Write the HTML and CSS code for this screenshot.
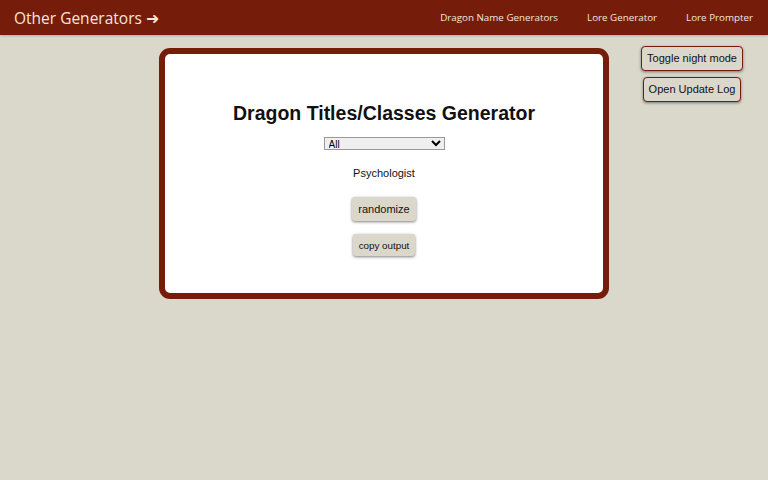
FILE: index.html
```html
<!DOCTYPE html>
<html>
<head>
  <title>Dragon Titles/Classes Generator</title>
  <link rel="stylesheet" href="styles.css">
</head>
<body>
  <div class="topnav">
    <a class="home" href="#">Other Generators &#10140;</a>
    <div class="links">
      <a href="#">Dragon Name Generators</a>
      <a href="#">Lore Generator</a>
      <a href="#">Lore Prompter</a>
    </div>
  </div>

  <div class="side-buttons">
    <button class="side-btn">Toggle night mode</button>
    <button class="side-btn">Open Update Log</button>
  </div>

  <div class="box">
    <h1>Dragon Titles/Classes Generator</h1>
    <select id="category">
      <option>All</option>
      <option>Titles</option>
      <option>Classes</option>
    </select>
    <p id="output">Psychologist</p>
    <button class="gen-btn">randomize</button>
    <button class="gen-btn small">copy output</button>
  </div>
</body>
</html>
```

FILE: styles.css
```css
body {
  margin: 0;
  background-color: #dad7cb;
  font-family: "Liberation Sans", Arial, sans-serif;
}

.topnav {
  height: 35px;
  background-color: #761c0a;
  display: flex;
  align-items: center;
  justify-content: space-between;
  padding: 0 15px 0 14px;
  box-shadow: 0 1px 2px rgba(0, 0, 0, 0.2);
}

.topnav a {
  color: #f3e6df;
  text-decoration: none;
  font-family: "Open Sans", sans-serif;
}

.home {
  font-size: 15.5px;
}

.links {
  display: flex;
  gap: 29px;
}

.links a {
  font-size: 9.8px;
}

.side-buttons {
  position: absolute;
  top: 46px;
  right: 25px;
  display: flex;
  flex-direction: column;
  align-items: center;
  gap: 6px;
}

.side-btn {
  font-family: "Liberation Sans", Arial, sans-serif;
  font-size: 11px;
  color: #111;
  background-color: #dcd7cb;
  border: 1px solid #761c0a;
  border-radius: 4px;
  padding: 5px 5px 6px;
  box-shadow: 0 1px 3px rgba(0, 0, 0, 0.45);
}

.box {
  width: 438px;
  margin: 13px auto 0;
  background-color: #fff;
  border: 6px solid #761c0a;
  border-radius: 11px;
  text-align: center;
  padding: 48px 0 37px;
}

h1 {
  margin: 0 0 12px;
  font-size: 19.5px;
  font-weight: bold;
  color: #111;
}

#category {
  box-sizing: border-box;
  width: 121px;
  height: 13px;
  font-size: 10px;
  line-height: 11px;
  padding: 0;
  border: 1px solid #999;
  font-family: "Liberation Sans", Arial, sans-serif;
  display: block;
  margin: 0 auto;
}

#output {
  font-size: 11px;
  margin: 17px 0 18px;
  color: #111;
}

.gen-btn {
  display: block;
  margin: 0 auto 13px;
  font-family: "Liberation Sans", Arial, sans-serif;
  font-size: 11px;
  color: #111;
  background-color: #dcd7cb;
  border: none;
  border-radius: 3px;
  padding: 6px 6px;
  box-shadow: 0 1px 3px rgba(0, 0, 0, 0.5);
}

.gen-btn.small {
  font-size: 9.8px;
  padding: 6px 6px 5px;
  margin-bottom: 0;
}
```
